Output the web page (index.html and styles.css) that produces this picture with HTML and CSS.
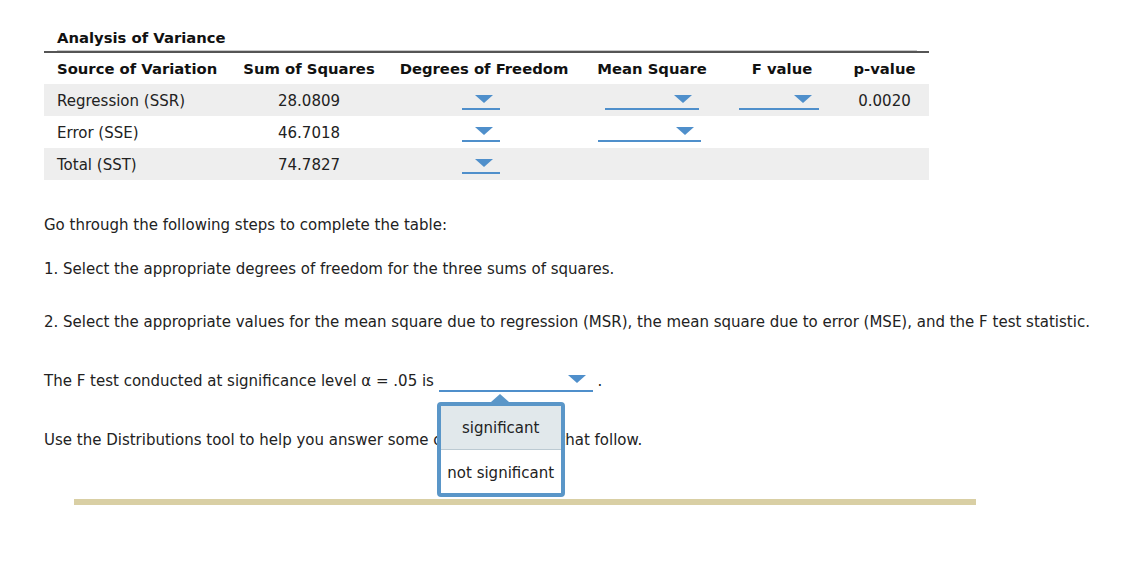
FILE: index.html
```html
<!DOCTYPE html>
<html>
<head>
<meta charset="utf-8">
<link rel="stylesheet" href="styles.css">
</head>
<body>
<div class="page">
  <div class="anova">
    <div class="title">Analysis of Variance</div>
    <table class="tbl">
      <colgroup>
        <col class="c1"><col class="c2"><col class="c3"><col class="c4"><col class="c5"><col class="c6">
      </colgroup>
      <thead>
        <tr>
          <th class="left">Source of Variation</th>
          <th>Sum of Squares</th>
          <th>Degrees of Freedom</th>
          <th>Mean Square</th>
          <th>F value</th>
          <th>p-value</th>
        </tr>
      </thead>
      <tbody>
        <tr class="shade">
          <td class="left">Regression (SSR)</td>
          <td>28.0809</td>
          <td><span class="dd dd-df"><span class="tri"></span></span></td>
          <td><span class="dd dd-ms1"><span class="tri"></span></span></td>
          <td><span class="dd dd-f"><span class="tri"></span></span></td>
          <td>0.0020</td>
        </tr>
        <tr>
          <td class="left">Error (SSE)</td>
          <td>46.7018</td>
          <td><span class="dd dd-df"><span class="tri"></span></span></td>
          <td><span class="dd dd-ms2"><span class="tri"></span></span></td>
          <td></td>
          <td></td>
        </tr>
        <tr class="shade">
          <td class="left">Total (SST)</td>
          <td>74.7827</td>
          <td><span class="dd dd-df"><span class="tri"></span></span></td>
          <td></td>
          <td></td>
          <td></td>
        </tr>
      </tbody>
    </table>
  </div>

  <p class="p1">Go through the following steps to complete the table:</p>
  <p class="p2">1. Select the appropriate degrees of freedom for the three sums of squares.</p>
  <p class="p3">2. Select the appropriate values for the mean square due to regression (MSR), the mean square due to error (MSE), and the F test statistic.</p>
  <p class="p4">The F test conducted at significance level α = .05 is <span class="dd-wrap"><span class="dd dd-test"><span class="tri"></span></span><span class="popup"><span class="arrow"></span><span class="opt sel">significant</span><span class="opt">not significant</span></span></span> .</p>
  <p class="p5">Use the Distributions tool to help you answer some of the questions that follow.</p>
  <div class="bar"></div>
</div>
</body>
</html>
```

FILE: styles.css
```css
body {
  margin: 0;
  font-family: "DejaVu Sans", Verdana, sans-serif;
  font-size: 15px;
  color: #222;
  background: #fff;
}
.page {
  padding: 28px 0 0 44px;
  width: 1100px;
}
.anova {
  width: 885px;
}
.title {
  font-weight: bold;
  font-size: 14.8px;
  color: #111;
  margin: 0 12px 0 13px;
  height: 22px;
  line-height: 20px;
  border-bottom: 1px solid #c8c8c8;
}
.tbl {
  width: 885px;
  border-collapse: collapse;
  border-top: 2px solid #555;
  table-layout: fixed;
}
.c1 { width: 186px; }
.c2 { width: 158px; }
.c3 { width: 192px; }
.c4 { width: 144px; }
.c5 { width: 116px; }
.c6 { width: 89px; }
.tbl th {
  font-weight: bold;
  font-size: 14.8px;
  color: #111;
  height: 31px;
  padding: 0;
  text-align: center;
  vertical-align: middle;
}
.tbl td {
  height: 30px;
  padding: 2px 0 0;
  text-align: center;
  vertical-align: middle;
}
.tbl .left {
  text-align: left;
  padding-left: 13px;
}
.shade td { background: #eeeeee; }

.dd {
  display: inline-block;
  position: relative;
  height: 14px;
  border-bottom: 2px solid #4f8fcb;
  vertical-align: middle;
}
.tri {
  position: absolute;
  right: 7px;
  top: 1px;
  width: 0;
  height: 0;
  border-left: 9px solid transparent;
  border-right: 9px solid transparent;
  border-top: 8px solid #4f8fcb;
}
.dd-df { width: 38px; margin-right: 6px; }
.dd-ms1 { width: 94px; left: 0px; }
.dd-ms2 { width: 103px; left: -3px; }
.dd-f { width: 80px; left: -3px; }
.dd-test { width: 154px; height: 17px; vertical-align: -6px; }
.dd-test .tri { top: 2px; }

p { margin: 0; }
.p1 { margin-top: 36px; }
.p2 { margin-top: 26px; }
.p3 { margin-top: 35px; }
.p4 { margin-top: 41px; }
.p5 { margin-top: 39px; }

.dd-wrap {
  position: relative;
  display: inline-block;
}
.popup {
  position: absolute;
  left: -2px;
  top: 30px;
  width: 120px;
  border: 4px solid #5a96c8;
  border-radius: 4px;
  background: #fff;
  z-index: 2;
}
.arrow {
  position: absolute;
  left: 50px;
  top: -12px;
  width: 0;
  height: 0;
  border-left: 9px solid transparent;
  border-right: 9px solid transparent;
  border-bottom: 8px solid #5a96c8;
}
.opt {
  display: block;
  text-align: center;
  white-space: nowrap;
  height: 43px;
  line-height: 46px;
}
.opt.sel {
  background: #e1e8eb;
  border-bottom: 1px solid #bccad2;
  height: 43px;
  line-height: 44px;
}
.bar {
  margin: 50px 0 0 30px;
  width: 902px;
  height: 6px;
  background: #d9cfa4;
}
```
